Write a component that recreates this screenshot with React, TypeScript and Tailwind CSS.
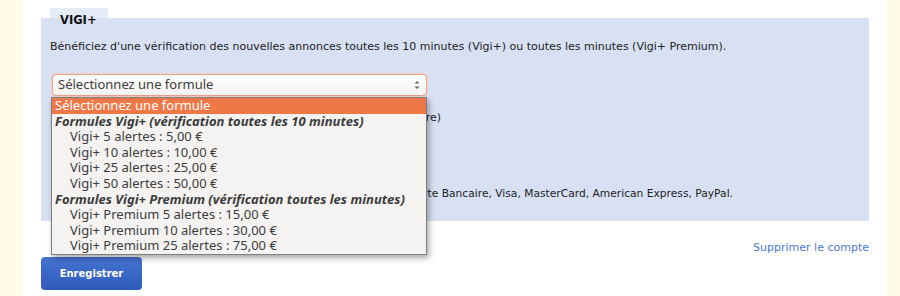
import React from "react";

const ubuntu = { fontFamily: '"Noto Sans", "Open Sans", sans-serif' };

type Row = { label: string; kind: "active" | "group" | "option" };

const rows: Row[] = [
  { label: "Sélectionnez une formule", kind: "active" },
  { label: "Formules Vigi+ (vérification toutes les 10 minutes)", kind: "group" },
  { label: "Vigi+ 5 alertes : 5,00 €", kind: "option" },
  { label: "Vigi+ 10 alertes : 10,00 €", kind: "option" },
  { label: "Vigi+ 25 alertes : 25,00 €", kind: "option" },
  { label: "Vigi+ 50 alertes : 50,00 €", kind: "option" },
  { label: "Formules Vigi+ Premium (vérification toutes les minutes)", kind: "group" },
  { label: "Vigi+ Premium 5 alertes : 15,00 €", kind: "option" },
  { label: "Vigi+ Premium 10 alertes : 30,00 €", kind: "option" },
  { label: "Vigi+ Premium 25 alertes : 75,00 €", kind: "option" },
];

function FormulaSelect() {
  return (
    <div className="relative w-[375px]" style={ubuntu}>
      <div className="flex h-[22px] items-center justify-between rounded-[4px] border border-[#e9a48a] bg-gradient-to-b from-white to-[#f4f3f1] pl-[5px] pr-[6px] text-[13px] text-[#3c3c3c] shadow-[0_0_0_1px_#f6d3c4]">
        <span>Sélectionnez une formule</span>
        <svg width="6" height="10" viewBox="0 0 6 10" className="text-[#666]">
          <path d="M0.5 3.5 L3 1 L5.5 3.5 Z M0.5 6.5 L3 9 L5.5 6.5 Z" fill="currentColor" />
        </svg>
      </div>
      {/* open option list, drawn over the form */}
      <div className="absolute left-[-1px] top-[23px] z-10 w-[376px] border border-[#7f7f7f] bg-[#f4f3f1] shadow-[2px_3px_6px_rgba(0,0,0,0.35)]">
        {rows.map((row) => (
          <div
            key={row.label}
            className={
              row.kind === "active"
                ? "h-[15.6px] bg-[#f07746] pl-[3px] text-[13px] leading-[15.6px] text-white"
                : row.kind === "group"
                ? "h-[15.6px] pl-[3px] text-[13px] font-bold italic leading-[15.6px] text-[#3c3c3c]"
                : "h-[15.6px] pl-[18px] text-[13px] leading-[15.6px] text-[#3c3c3c]"
            }
          >
            {row.label}
          </div>
        ))}
      </div>
    </div>
  );
}

export default function App() {
  return (
    <div
      className="flex h-[296px] w-[900px] bg-[#fffbe6] text-[#222]"
      style={{ fontFamily: '"DejaVu Sans", Verdana, sans-serif' }}
    >
      <div className="w-[23px] shrink-0" />
      <div className="w-[864px] shrink-0 bg-white pl-[18px] pr-[18px] pt-[8px]">
        <div className="ml-[9px] h-[10px] w-[58px] bg-[#e4eaf6]" />
        <section className="flex h-[203px] flex-col bg-[#d8e1f3] pl-[9px]">
          <h2 className="-mt-[5px] h-[14px] pl-[10px] text-[11.5px] font-bold leading-[14px] text-[#111]">
            VIGI+
          </h2>
          <p className="mt-[13px] text-[11px] leading-[14px]">
            Bénéficiez d'une vérification des nouvelles annonces toutes les 10 minutes (Vigi+) ou toutes les minutes (Vigi+ Premium).
          </p>
          <div className="mt-[20px] pl-[2px]">
            <FormulaSelect />
          </div>
          <div className="mt-[15px] flex w-[391px] justify-end overflow-hidden whitespace-nowrap text-[11px] leading-[14px]">
            <span className="shrink-0">Renouvellement automatique (paiement mensuel libre)</span>
          </div>
          <div className="mt-[62px] flex w-[683px] justify-end overflow-hidden whitespace-nowrap text-[10.7px] leading-[14px]">
            <span className="shrink-0">
              Moyens de paiement acceptés : Carte Bancaire, Visa, MasterCard, American Express, PayPal.
            </span>
          </div>
        </section>
        <div className="mt-[20px] flex justify-end text-[11px] leading-[14px]">
          <a href="#" className="text-[#4d78d3]">
            Supprimer le compte
          </a>
        </div>
        <button className="mt-[2px] h-[33px] w-[101px] rounded-[4px] bg-gradient-to-b from-[#4473cf] to-[#2f5bbd] text-[10px] font-bold text-white">
          Enregistrer
        </button>
      </div>
    </div>
  );
}
